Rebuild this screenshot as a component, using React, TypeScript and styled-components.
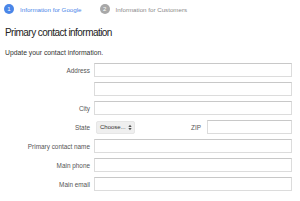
import styled, { createGlobalStyle } from "styled-components"

const GlobalStyle = createGlobalStyle`
    body {
        margin: 0;
        background: #fff;
        font-family: "Liberation Sans", Arial, sans-serif;
    }
`

const Page = styled.div`
    width: 300px;
    height: 201px;
    padding: 4px 8px 0 4px;
    box-sizing: border-box;
    overflow: hidden;
`

const Steps = styled.div`
    display: flex;
    align-items: center;
    gap: 18px;
    height: 10px;
`

const Step = styled.div<{ active?: boolean }>`
    display: flex;
    align-items: center;
    gap: 6px;
    font-size: 6.2px;
    color: ${({ active }) => (active ? "#4a86e8" : "#8a8a8a")};
`

const StepNum = styled.span<{ active?: boolean }>`
    width: 10px;
    height: 10px;
    border-radius: 50%;
    background: ${({ active }) => (active ? "#4a86e8" : "#a8a8a8")};
    color: #fff;
    font-size: 6px;
    display: flex;
    align-items: center;
    justify-content: center;
`

const Title = styled.h1`
    margin: 13px 0 0 1px;
    font-size: 10px;
    letter-spacing: -0.55px;
    font-weight: normal;
    color: #222;
    line-height: 12px;
`

const Subtitle = styled.p`
    margin: 10px 0 0 1px;
    font-size: 6.8px;
    color: #333;
    line-height: 8px;
`

const Form = styled.div`
    margin-top: 6px;
    display: flex;
    flex-direction: column;
    gap: 5px;
`

const Row = styled.div`
    display: grid;
    grid-template-columns: 86px 1fr;
    column-gap: 4px;
    align-items: center;
    height: 14px;
`

const Label = styled.label`
    font-size: 6.4px;
    color: #555;
    text-align: right;
`

const Input = styled.div`
    height: 14px;
    box-sizing: border-box;
    border: 1px solid #dcdcdc;
    border-top-color: #c8c8c8;
    background: #fff;
`

const Split = styled.div`
    display: flex;
    align-items: center;
`

const Select = styled.div`
    margin-left: 2px;
    width: 39px;
    height: 13px;
    box-sizing: border-box;
    background: #efefef;
    border: 1px solid #e6e6e6;
    border-radius: 2px;
    font-size: 6px;
    color: #333;
    display: flex;
    align-items: center;
    justify-content: space-between;
    padding: 0 2px 0 3px;
    white-space: nowrap;

    svg {
        flex-shrink: 0;
    }
`

const ZipLabel = styled(Label)`
    margin-left: auto;
    margin-right: 6px;
`

const ZipInput = styled(Input)`
    width: 85px;
`

function UpDown() {
    return (
        <svg width="4" height="7" viewBox="0 0 4 7">
            <path d="M0.3 3 L2 0.8 L3.7 3 Z M0.3 4 L2 6.2 L3.7 4 Z" fill="#555" />
        </svg>
    )
}

export default function App() {
    return (
        <>
            <GlobalStyle />
            <Page>
                <Steps>
                    <Step active>
                        <StepNum active>1</StepNum>
                        Information for Google
                    </Step>
                    <Step>
                        <StepNum>2</StepNum>
                        Information for Customers
                    </Step>
                </Steps>
                <Title>Primary contact information</Title>
                <Subtitle>Update your contact information.</Subtitle>
                <Form>
                    <Row>
                        <Label>Address</Label>
                        <Input />
                    </Row>
                    <Row>
                        <span />
                        <Input />
                    </Row>
                    <Row>
                        <Label>City</Label>
                        <Input />
                    </Row>
                    <Row>
                        <Label>State</Label>
                        <Split>
                            <Select>
                                <span>Choose...</span>
                                <UpDown />
                            </Select>
                            <ZipLabel>ZIP</ZipLabel>
                            <ZipInput />
                        </Split>
                    </Row>
                    <Row>
                        <Label>Primary contact name</Label>
                        <Input />
                    </Row>
                    <Row>
                        <Label>Main phone</Label>
                        <Input />
                    </Row>
                    <Row>
                        <Label>Main email</Label>
                        <Input />
                    </Row>
                </Form>
            </Page>
        </>
    )
}
